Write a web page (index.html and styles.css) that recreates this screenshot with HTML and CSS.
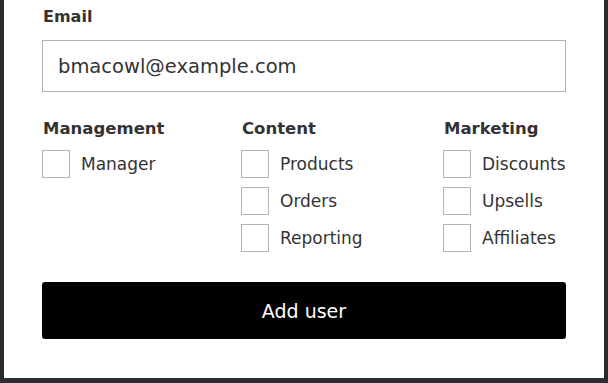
FILE: index.html
```html
<!DOCTYPE html>
<html lang="en">
<head>
  <meta charset="UTF-8" />
  <title>Add user</title>
  <link rel="stylesheet" href="styles.css">
</head>
<body>
  <div class="panel">
    <form class="user-form">
      <label class="field-label" for="email">Email</label>
      <input class="text-input" id="email" type="text" value="bmacowl@example.com">

      <div class="perm-grid">
        <div class="perm-group">
          <div class="group-title">Management</div>
          <label class="perm-row"><span class="box"></span>Manager</label>
        </div>
        <div class="perm-group">
          <div class="group-title">Content</div>
          <label class="perm-row"><span class="box"></span>Products</label>
          <label class="perm-row"><span class="box"></span>Orders</label>
          <label class="perm-row"><span class="box"></span>Reporting</label>
        </div>
        <div class="perm-group">
          <div class="group-title">Marketing</div>
          <label class="perm-row"><span class="box"></span>Discounts</label>
          <label class="perm-row"><span class="box"></span>Upsells</label>
          <label class="perm-row"><span class="box"></span>Affiliates</label>
        </div>
      </div>

      <button class="submit-btn" type="button">Add user</button>
    </form>
  </div>
</body>
</html>
```

FILE: styles.css
```css
* { margin: 0; padding: 0; box-sizing: border-box; }
body {
  background-color: #292c30;
  font-family: 'DejaVu Sans', sans-serif;
  color: #333;
}
.panel {
  background-color: #fff;
  width: 600px;
  height: 378px;
  margin-left: 4px;
  padding: 7px 38px 0 38px;
}
.user-form { display: flex; flex-direction: column; }
.field-label {
  font-size: 16px;
  font-weight: 600;
  line-height: 20px;
  padding-left: 1px;
  margin-bottom: 13px;
}
.text-input {
  height: 52px;
  border: 1px solid #b3b3b3;
  padding: 0 15px;
  font-family: inherit;
  font-size: 19.5px;
  color: #333;
  outline: none;
}
.perm-grid {
  display: grid;
  grid-template-columns: 199px 202px 1fr;
  margin-top: 27px;
}
.perm-group { display: flex; flex-direction: column; gap: 9px; }
.group-title {
  font-size: 16.5px;
  font-weight: 600;
  line-height: 20px;
  padding-left: 1px;
  margin-bottom: 2px;
}
.perm-row {
  display: flex;
  align-items: center;
  gap: 11px;
  font-size: 17px;
  height: 28px;
}
.box {
  flex: 0 0 28px;
  width: 28px;
  height: 28px;
  border: 1px solid #b3b3b3;
  background: #fff;
}
.submit-btn {
  margin-top: 30px;
  height: 57px;
  background-color: #000;
  color: #fff;
  border: none;
  border-radius: 3px;
  font-family: inherit;
  font-size: 19px;
  font-weight: normal;
}
```
